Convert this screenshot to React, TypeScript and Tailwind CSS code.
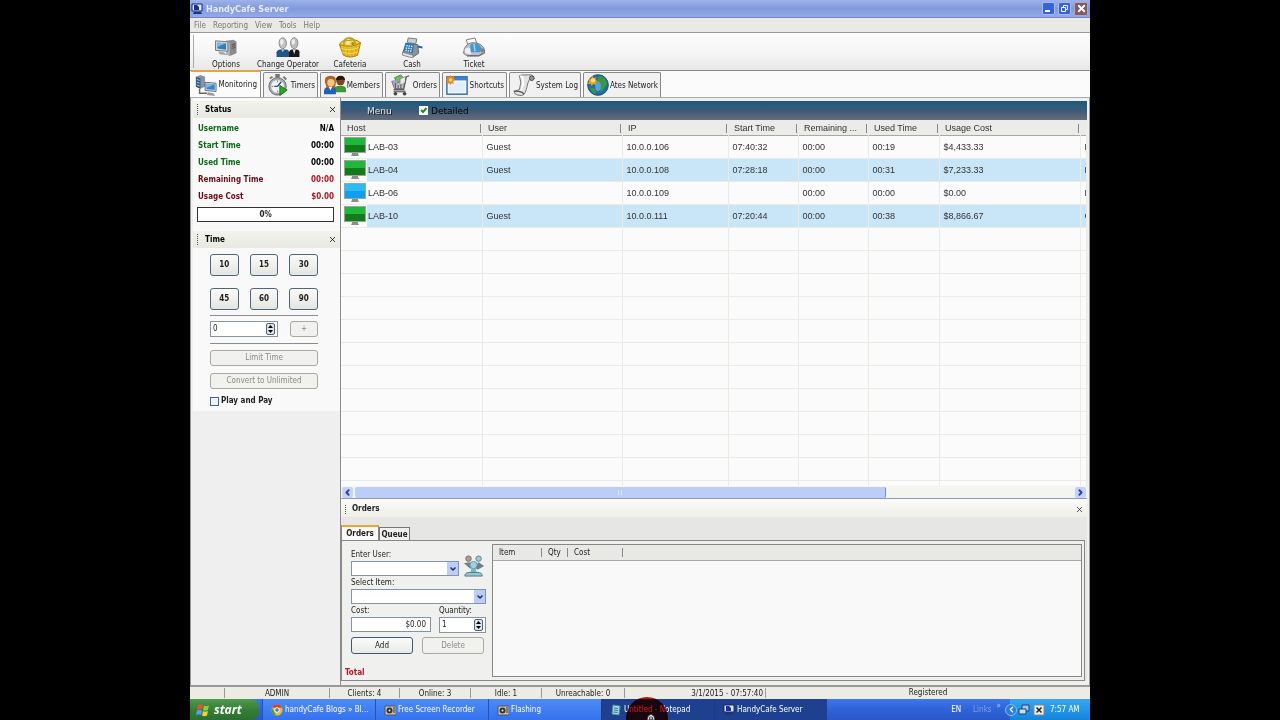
import React from 'react';
import { ChevronDown, ChevronLeft, ChevronRight, X } from 'lucide-react';

const OptionsIcon = () => (
  <svg viewBox="0 0 24 22" className="h-[21px] w-6">
    <path d="M12 4l8-1 3 2v12l-7 3-4-2z" fill="#8b8b8b" />
    <path d="M12 4l4 2v14l-4-2z" fill="#b5b5b5" />
    <path d="M18 8l4-1M18 10l4-1M18 12l4-1" stroke="#555" />
    <path d="M1 4l13 1v10L1 14z" fill="#d3d6d8" stroke="#777" />
    <path d="M3 6l9 .5v6.800L3 12z" fill="#2f7fc0" />
    <path d="M3 6l9 .5-9 4z" fill="#79b8e6" />
    <path d="M4 15l6 1 3 3-8-1z" fill="#a7a7a7" />
  </svg>
);

const OperatorIcon = () => (
  <svg viewBox="0 0 24 22" className="h-[21px] w-6">
    <path d="M0 21v-5q1-3 4-3h6q3 0 3 3v5z" fill="#1f5684" />
    <path d="M13 21v-5q1-3 3-3h5q3 0 3 3v5z" fill="#16181c" />
    <path d="M17 13l1.500 5 1.500-5z" fill="#ddd" />
    <path d="M5 13l1.500 3L8 13z" fill="#a9c5dc" />
    <ellipse cx="6.500" cy="6.500" rx="3.800" ry="5.800" fill="#c4c4c4" stroke="#888" />
    <ellipse cx="18.500" cy="6.500" rx="3.800" ry="5.800" fill="#bdbdbd" stroke="#888" />
    <ellipse cx="5.500" cy="5" rx="1.800" ry="3" fill="#eee" />
    <ellipse cx="17.500" cy="5" rx="1.800" ry="3" fill="#eee" />
  </svg>
);

const BasketIcon = () => (
  <svg viewBox="0 0 24 22" className="h-[21px] w-6">
    <path d="M1 8q10 3 22-2l-3 13q-8 4-15 0z" fill="#e8bd22" stroke="#a97c0a" />
    <path d="M5 11l2 9M9 12l1 9M14 12v9M19 10l-2 10" stroke="#c3920f" strokeWidth=".7" />
    <path d="M3 12q9 3 18-1M4 16q8 3 16 0" fill="none" stroke="#f7dd62" />
    <path d="M1 8q2-5 8-4 8-3 14 2-8 6-22 2z" fill="#f3d24c" stroke="#a97c0a" />
    <path d="M6 9Q4 1 12 1q6 1 6 9" fill="none" stroke="#c8a021" strokeWidth="2" />
    <circle cx="10" cy="6" r="2" fill="#fff1a4" />
    <circle cx="15" cy="7" r="1.500" fill="#a6831a" />
  </svg>
);

const CashIcon = () => (
  <svg viewBox="0 0 24 22" className="h-[21px] w-6">
    <path d="M8 1l9 1-1 5-9-1z" fill="#c9ced3" stroke="#777" />
    <path d="M6 7l12 1 1 9-6 4-11-4z" fill="#8c9399" stroke="#667" />
    <path d="M5 6l9 1-1 10-10-2z" fill="#2d77b4" />
    <path d="M6 9l7 1M5.500 11.500l7 1M5 14l7 1" stroke="#d8ecfa" strokeDasharray="1.500 1" strokeWidth="1.500" />
    <path d="M2 16l11 3v3L2 19z" fill="#e1e5e8" stroke="#888" />
    <path d="M18 9l5 1v2l-5-1z" fill="#2567a5" />
  </svg>
);

const TicketIcon = () => (
  <svg viewBox="0 0 24 22" className="h-[21px] w-6">
    <path d="M4 3l9-2 2 6-9 3z" fill="#fff" stroke="#777" />
    <path d="M2 12q3-6 9-6 9 0 12 7v4l-6 3H5l-4-3z" fill="#bcc3ca" stroke="#6d7379" />
    <path d="M8 8q8-4 12 4l-2 4H8z" fill="#4798d1" />
    <path d="M12 7l1 8" stroke="#a7d5f1" strokeWidth="1.500" />
    <path d="M2 13q4-3 6-1l1 6-6-1z" fill="#eef1f3" />
    <circle cx="20.500" cy="14" r="2.200" fill="#7d848b" />
    <path d="M5 19.500h12l5-3" stroke="#666" fill="none" />
  </svg>
);

const MonitoringIcon = () => (
  <svg viewBox="0 0 24 24" className="size-[22px]">
    <path d="M1 3l5-2 5 2v11l-5 2-5-2z" fill="#8496a5" />
    <path d="M1 3l5 2v11l-5-2z" fill="#34598a" />
    <path d="M2 6l3 1M2 9l3 1M2 12l3 1" stroke="#b7d7f5" />
    <path d="M5 16v5h8" fill="none" stroke="#666" strokeWidth="1.500" />
    <path d="M11 9l12 1v9l-12-1z" fill="#d5d9dc" stroke="#666" />
    <path d="M12.500 10.500l9 .8v6l-9-.8z" fill="#2f86cb" />
    <path d="M12.500 10.500l9 .8-9 4z" fill="#79b8e6" />
    <path d="M14 20l6 1 2 3-9-1z" fill="#999" />
  </svg>
);

const TimersIcon = () => (
  <svg viewBox="0 0 24 24" className="size-[22px]">
    <path d="M9 0h5v4H9z" fill="#777" />
    <path d="M3 5l3-2M18 3l3 3" stroke="#777" strokeWidth="2" />
    <circle cx="11.500" cy="13.500" r="9.500" fill="#a4abb1" stroke="#666" />
    <circle cx="11.500" cy="13.500" r="7" fill="#eef3f7" />
    <path d="M11.500 7v2M5 13.500h2M11.500 20v-2" stroke="#777" />
    <path d="M11.500 13.500l4-5M11.500 13.500H8" stroke="#2b4a67" strokeWidth="1.500" />
    <path d="M14 12.500l8 5-8 6z" fill="#2ea52a" stroke="#1b701a" />
  </svg>
);

const MembersIcon = () => (
  <svg viewBox="0 0 24 24" className="size-[22px]">
    <path d="M11 20v-5q2-2 4-2h5q4 0 4 4v3z" fill="#3f982e" />
    <circle cx="18" cy="8" r="4.500" fill="#7a4a23" />
    <path d="M13 7q0-5 5-5t5 5l-3-1z" fill="#27180c" />
    <path d="M0 22v-4q1-4 5-4h4q4 0 4 4v4z" fill="#2461b4" />
    <path d="M1 9q-1-7 6-7t6 7l-1 6H3z" fill="#b0641c" />
    <circle cx="7.500" cy="9.500" r="4" fill="#f1c48e" />
    <path d="M5 14l2 4 2-4z" fill="#fff" />
  </svg>
);

const CartIcon = () => (
  <svg viewBox="0 0 24 24" className="size-[22px]">
    <path d="M3 8l14-1-1 9H6z" fill="#c3c6c9" stroke="#6b6b6b" />
    <path d="M6 4l7-3 4 5-8 4z" fill="#6dbf58" stroke="#4d8a3c" />
    <path d="M12 5l6-2v7l-6 2z" fill="#e8e8f2" stroke="#888" />
    <path d="M4 7l5 0 0 6-4-1z" fill="#b19ad0" />
    <path d="M22 2l-3 1-3 14H5M7 10v6M10 12v4M13 12v4" fill="none" stroke="#5f5f5f" strokeWidth="1.300" />
    <path d="M5 18h13v2H5z" fill="#777" />
    <circle cx="7" cy="21.500" r="2" fill="#444" />
    <circle cx="17" cy="21.500" r="2" fill="#444" />
  </svg>
);

const ShortcutsIcon = () => (
  <svg viewBox="0 0 24 24" className="size-[22px]">
    <rect x="1" y="3" width="22" height="19" fill="#f4f9fe" stroke="#2b62ad" strokeWidth="1.500" />
    <path d="M1 3h22v4H1z" fill="#3b7fd4" />
    <path d="M3 9h18v11H3z" fill="#e2effb" />
    <path d="M5 1l1.200 2L9 2.500 8.200 5 10 6.500 8 8l.5 2.500L6 10l-1.200 2L3.500 10 1 10.500 1.500 8 0 6.500 1.500 5 1 2.500 3.700 3z" fill="#e8891c" />
    <circle cx="5" cy="6.500" r="2" fill="#ffd84a" />
  </svg>
);

const LogIcon = () => (
  <svg viewBox="0 0 24 24" className="size-[22px]">
    <path d="M7 2q2-1 4-1h9q3 1 3 4l-2 2-3-1q-2 3-3 9-1 6-4 8-1 1-6 0-4-1-4-4l6-2q3-8 0-15z" fill="#e2e2e2" stroke="#6a6a6a" />
    <path d="M8 2q4 2 3 9l-2 7" fill="none" stroke="#fff" strokeWidth="2" />
    <circle cx="20.500" cy="4.500" r="2.500" fill="#999" stroke="#444" />
    <path d="M1 19q3-1 9 1l2 2" fill="none" stroke="#555" strokeWidth="1.500" />
  </svg>
);

const GlobeIcon = () => (
  <svg viewBox="0 0 24 24" className="size-[22px]">
    <circle cx="12" cy="12" r="11.300" fill="#1d6fa9" stroke="#174a6c" />
    <path d="M13 2q8 1 9 9l-3 4-3 5-3-3 1-5-3-5zM3 15l5 0 2 4-1 3q-4-2-6-7z" fill="#3c9444" />
    <path d="M10 9q4-2 5 3t-3 7q-5-2-2-10z" fill="#4fa6e0" />
    <path d="M6 2l1.200 2.500L10 3.500 9.500 6.500 12 8l-2.500 1.200L10 12l-3-1-2 2-1-2.500-3 .5L2.500 8 1 6l3-.5z" fill="#eda41c" />
    <circle cx="6.500" cy="7" r="2.300" fill="#ffe46a" />
  </svg>
);

const UsersIcon = () => (
  <svg viewBox="0 0 24 24" className="size-[22px]">
    <circle cx="6" cy="4" r="3" fill="#b39a92" stroke="#7c6c67" />
    <circle cx="17" cy="4" r="3" fill="#a5c4cf" stroke="#5d8190" />
    <path d="M1 9l6-1 5 4-4 3zM23 12l-6-4-5 5 4 3z" fill="#67828e" />
    <circle cx="11.500" cy="11" r="4" fill="#9fd0e2" stroke="#5d91a6" />
    <path d="M9 15h5l1 5H8z" fill="#7db4c8" />
    <path d="M2 23q0-4 5-4h9q5 0 5 4z" fill="#8fc5d8" stroke="#4d7787" />
  </svg>
);

const HostIcon = ({ idle }: { idle: boolean }) => (
  <svg viewBox="0 0 22 19" className="h-[19px] w-[22px] shrink-0">
    <path d="M8 15h6v2l1 2H7l1-2z" fill="#8d8d8d" />
    <rect width="22" height="16" fill="#98a59b" />
    <rect x="1" y="1" width="20" height="7" fill={idle ? '#2fb9f5' : '#1fb83a'} />
    <rect x="1" y="8" width="20" height="7" fill={idle ? '#0e9ff0' : '#157a1c'} />
  </svg>
);

const PcIcon = () => (
  <svg viewBox="0 0 12 12" className="size-3 shrink-0">
    <path d="M1 1h10v7H1z" fill="#dfe8f8" stroke="#16266b" />
    <path d="M3 2h3l2 2v3H3z" fill="#1a2f8f" />
    <path d="M3 9h7l1 2H2z" fill="#20357a" />
  </svg>
);

const CameraIcon = () => (
  <svg viewBox="0 0 12 12" className="size-3 shrink-0">
    <path d="M1 2h11v9H1z" fill="#c9c4b8" stroke="#555" />
    <circle cx="5.500" cy="6.500" r="3" fill="#333" />
    <circle cx="5.500" cy="6.500" r="1" fill="#eee" />
    <path d="M10 3v6" stroke="#333" />
  </svg>
);

const ChromeIcon = () => (
  <svg viewBox="0 0 12 12" className="size-3 shrink-0">
    <circle cx="6" cy="6" r="5.500" fill="#e8c02c" />
    <path d="M1 3.800A5.500 5.500 0 0 1 11 3.800H6z" fill="#dd3c2f" />
    <path d="M1 3.800L5 11.400A5.500 5.500 0 0 1 1 3.800z" fill="#3a9e48" />
    <circle cx="6" cy="6" r="2.300" fill="#3d79e0" stroke="#fff" />
  </svg>
);

const NotepadIcon = () => (
  <svg viewBox="0 0 12 12" className="size-3 shrink-0">
    <path d="M3 1l7 1-1 9-7-1z" fill="#9fdbe8" stroke="#4d8da2" />
    <path d="M4 4l4 .5M4 6l4 .5M3.500 8l4 .5" stroke="#36788f" />
  </svg>
);

const toolbar = [
  { icon: OptionsIcon, label: 'Options' },
  { icon: OperatorIcon, label: 'Change Operator' },
  { icon: BasketIcon, label: 'Cafeteria' },
  { icon: CashIcon, label: 'Cash' },
  { icon: TicketIcon, label: 'Ticket' },
];

const tabs = [
  { icon: TimersIcon, label: 'Timers', width: 'w-[55px]' },
  { icon: MembersIcon, label: 'Members', width: 'w-[63px]' },
  { icon: CartIcon, label: 'Orders', width: 'w-[55px]' },
  { icon: ShortcutsIcon, label: 'Shortcuts', width: 'w-[65px]' },
  { icon: LogIcon, label: 'System Log', width: 'w-[72px]' },
  { icon: GlobeIcon, label: 'Ates Network', width: 'w-[78px]' },
];

const status = [
  { label: 'Username', value: 'N/A', color: 'text-[#0a6a14]', valueColor: 'text-black' },
  { label: 'Start Time', value: '00:00', color: 'text-[#0a6a14]', valueColor: 'text-black' },
  { label: 'Used Time', value: '00:00', color: 'text-[#0a6a14]', valueColor: 'text-black' },
  { label: 'Remaining Time', value: '00:00', color: 'text-[#6b0a14]', valueColor: 'text-[#b01820]' },
  { label: 'Usage Cost', value: '$0.00', color: 'text-[#6b0a14]', valueColor: 'text-[#b01820]' },
];

const columns = [
  { label: 'Host', width: 'w-[141px]' },
  { label: 'User', width: 'w-[140px]' },
  { label: 'IP', width: 'w-[106px]' },
  { label: 'Start Time', width: 'w-[70px]' },
  { label: 'Remaining ...', width: 'w-[70px]' },
  { label: 'Used Time', width: 'w-[71px]' },
  { label: 'Usage Cost', width: 'w-[141px]' },
];

const hosts = [
  ['LAB-03', 'Guest', '10.0.0.106', '07:40:32', '00:00', '00:19', '$4,433.33', 'F'],
  ['LAB-04', 'Guest', '10.0.0.108', '07:28:18', '00:00', '00:31', '$7,233.33', 'F'],
  ['LAB-06', '', '10.0.0.109', '', '00:00', '00:00', '$0.00', 'N'],
  ['LAB-10', 'Guest', '10.0.0.111', '07:20:44', '00:00', '00:38', '$8,866.67', 'C'],
];

const statusBar = [
  { text: '', width: 'w-[35px]' },
  { text: 'ADMIN', width: 'w-[105px]' },
  { text: 'Clients: 4', width: 'w-[70px]' },
  { text: 'Online: 3', width: 'w-[71px]' },
  { text: 'Idle: 1', width: 'w-[71px]' },
  { text: 'Unreachable: 0', width: 'w-[83px]' },
];

const tasks = [
  { icon: ChromeIcon, label: 'handyCafe Blogs » Bl...', active: false },
  { icon: CameraIcon, label: 'Free Screen Recorder', active: false },
  { icon: CameraIcon, label: 'Flashing', active: false },
  { icon: NotepadIcon, label: 'Untitled - Notepad', active: true },
  { icon: PcIcon, label: 'HandyCafe Server', active: true },
];

function PanelHeader({ title }: { title: string }) {
  return (
    <div className="flex h-[17px] items-center bg-gradient-to-b from-[#f3f3ee] to-[#e9e9e4] pr-[3px] pl-1 font-bold text-black">
      <span className="h-[11px] border-l border-dotted border-[#555]" />
      <h2 className="ml-[7px] flex-1">{title}</h2>
      <button aria-label={`Close ${title}`}>
        <X className="size-[9px]" strokeWidth={2} />
      </button>
    </div>
  );
}

function Spinner({ id, value }: { id: string; value: string }) {
  return (
    <div className="flex h-4 items-center border border-[#8a94a0] bg-white pr-[2px]">
      <input id={id} aria-label={id} defaultValue={value} className="w-0 flex-1 pl-[2px] outline-none" />
      <div className="flex flex-col rounded-[2px] border border-[#56606c] bg-[#dfe5ee]">
        <button type="button" aria-label="Increase" className="flex h-[5px] w-[7px] items-center justify-center">
          <svg viewBox="0 0 5 3" className="h-[3px] w-[5px]"><path d="M0 3L2.500 0 5 3z" /></svg>
        </button>
        <button type="button" aria-label="Decrease" className="flex h-[5px] w-[7px] items-center justify-center">
          <svg viewBox="0 0 5 3" className="h-[3px] w-[5px]"><path d="M0 0l2.500 3L5 0z" /></svg>
        </button>
      </div>
    </div>
  );
}

function Combo({ id }: { id: string }) {
  return (
    <div className="relative h-[15px] border border-[#8492ab] bg-white">
      <select id={id} className="block h-full w-full appearance-none outline-none">
        <option></option>
      </select>
      <span className="pointer-events-none absolute inset-y-0 right-0 flex w-[11px] items-center justify-center bg-[#bccdf6]">
        <ChevronDown className="size-2 text-[#26365e]" strokeWidth={5} />
      </span>
    </div>
  );
}

function Sidebar() {
  return (
    <aside className="w-[150px] shrink-0 border-r border-[#8c8c8c] bg-[#efefef] pl-[2px]">
      <div className="bg-[#f9f9f9] pt-[3px] pb-[5px]">
        <PanelHeader title="Status" />
        <dl className="pt-[2px] pr-[6px] pl-[5px] font-bold">
          {status.map((item) => (
            <div key={item.label} className="flex h-[17px] items-center justify-between">
              <dt className={item.color}>{item.label}</dt>
              <dd className={item.valueColor}>{item.value}</dd>
            </div>
          ))}
        </dl>
        <div className="mt-[2px] mr-[6px] mb-[9px] ml-1 flex h-[15px] items-center justify-center border border-[#333] bg-white font-bold">
          0%
        </div>
        <PanelHeader title="Time" />
        <div className="mr-[22px] ml-[17px] pt-[6px]">
          <div className="grid grid-cols-3 gap-x-[11px] gap-y-3">
            {['10', '15', '30', '45', '60', '90'].map((n) => (
              <button key={n} className="h-[22px] rounded-[3px] border border-[#4d6679] bg-gradient-to-b from-[#fbfbfb] to-[#e4e4e0] font-bold">
                {n}
              </button>
            ))}
          </div>
          <div className="mt-[5px] mb-[6px] grid grid-cols-[68px_28px] justify-between border-y border-[#8c8c8c] pt-[5px] pb-[6px]">
            <Spinner id="Minutes" value="0" />
            <button disabled className="rounded-[3px] border border-[#a9a9a4] bg-[#f1f1ee] text-[#8a8a8a]">+</button>
          </div>
          <button disabled className="block h-4 w-full rounded-[3px] border border-[#a9a9a4] bg-[#f1f1ee] text-[#8a8a8a]">
            Limit Time
          </button>
          <button disabled className="mt-[7px] block h-4 w-full rounded-[3px] border border-[#a9a9a4] bg-[#f1f1ee] text-[#8a8a8a]">
            Convert to Unlimited
          </button>
          <label className="mt-[7px] flex items-center gap-[2px] font-bold">
            <input type="checkbox" className="size-[9px] appearance-none border border-[#4a6484] bg-[#f0f3f6]" />
            Play and Pay
          </label>
        </div>
      </div>
    </aside>
  );
}

function HostTable() {
  return (
    <div className="min-h-0 flex-1 overflow-hidden bg-[#fbfbfb]">
      <table className="w-full table-fixed border-collapse font-['Liberation_Sans',Arial,sans-serif] text-[9px] whitespace-nowrap text-[#333]">
        <thead>
          <tr className="h-[15px] border-b border-[#a8a8a8] bg-[#ebebe9]">
            {columns.map((col) => (
              <th key={col.label} className={`${col.width} p-0 font-normal`}>
                <div className="flex items-center justify-between overflow-hidden pt-[2px] pl-[6px]">
                  <span>{col.label}</span>
                  <span className="mr-[1px] h-[9px] w-px bg-[#888]" />
                </div>
              </th>
            ))}
            <th className="p-0" />
          </tr>
        </thead>
        <tbody>
          {hosts.map((row, i) => (
            <tr key={row[0]} className="h-[23px]">
              {row.map((cell, j) => (
                <td
                  key={j}
                  className={`overflow-hidden border-r border-b border-[#ebebe6] p-0 ${j === 0 ? '' : 'pl-1'} ${i % 2 === 1 && j > 0 ? 'bg-[#c9e6f8]' : ''}`}
                >
                  {j === 0 ? (
                    <div className="flex h-[22px] items-center pl-[3px]">
                      <HostIcon idle={i === 2} />
                      <span className={`ml-[1px] flex h-full flex-1 items-center pl-px ${i % 2 === 1 ? 'bg-[#c9e6f8]' : ''}`}>{cell}</span>
                    </div>
                  ) : (
                    cell
                  )}
                </td>
              ))}
            </tr>
          ))}
          {Array.from({ length: 12 }, (_, i) => (
            <tr key={i} className="h-[23px]">
              {Array.from({ length: 8 }, (_, j) => (
                <td key={j} className="border-r border-b border-[#ebebe6] p-0" />
              ))}
            </tr>
          ))}
        </tbody>
      </table>
    </div>
  );
}

function OrdersPanel() {
  return (
    <section className="bg-[#e6e6e4]">
      <div className="flex h-[18px] items-center bg-gradient-to-b from-[#fbfbf9] to-[#efeee8] pt-[2px] pr-[3px] pl-1 font-bold">
        <span className="h-[9px] border-l border-dotted border-[#555]" />
        <h2 className="ml-[6px] flex-1">Orders</h2>
        <button aria-label="Close Orders">
          <X className="size-[9px]" strokeWidth={2} />
        </button>
      </div>
      <div className="flex items-end pt-2 font-bold">
        <button className="h-[15px] w-[38px] border-x border-t-2 border-[#888] border-t-[#e8a92e] bg-[#f9f9f9]">Orders</button>
        <button className="h-[13px] w-[31px] border-x border-t border-[#777] bg-[#f1f1ee] pt-px">Queue</button>
      </div>
      <div className="mr-[2px] flex border border-[#888] bg-[#f0f0ee] pr-[2px]">
        <form className="flex w-[150px] shrink-0 flex-col pt-2">
          <div className="flex pl-[9px]">
            <div className="w-[108px] shrink-0">
              <label htmlFor="user" className="block h-3 leading-3">Enter User:</label>
              <Combo id="user" />
            </div>
            <button type="button" aria-label="Users" className="mt-[6px] ml-1">
              <UsersIcon />
            </button>
          </div>
          <div className="mr-[6px] ml-[9px]">
            <label htmlFor="item" className="block h-3 leading-3">Select Item:</label>
            <Combo id="item" />
          </div>
          <div className="mt-[1px] mr-[6px] ml-[9px] flex justify-between">
            <div className="w-20">
              <label htmlFor="cost" className="block h-3 leading-3">Cost:</label>
              <input id="cost" defaultValue="$0.00" className="block h-[15px] w-full border border-[#8492ab] bg-white pr-1 text-right outline-none" />
            </div>
            <div className="w-[47px]">
              <label htmlFor="quantity" className="block h-3 leading-3">Quantity:</label>
              <Spinner id="quantity" value="1" />
            </div>
          </div>
          <div className="mt-1 mr-2 ml-[9px] flex justify-between">
            <button type="button" className="h-[17px] w-[62px] rounded-[3px] border border-[#3f5a70] bg-gradient-to-b from-[#fbfbfb] to-[#e9e9e5]">Add</button>
            <button type="button" disabled className="h-[17px] w-[62px] rounded-[3px] border border-[#a9a9a4] bg-[#f1f1ee] text-[#8a8a8a]">Delete</button>
          </div>
          <p className="mt-[14px] mb-[2px] ml-[3px] font-bold text-[#b01820]">Total</p>
        </form>
        <div className="my-[3px] flex-1 border border-[#888] bg-[#f9f9f9]">
          <table className="w-full table-fixed">
            <thead>
              <tr className="h-[15px] border-b border-[#a8a8a8] bg-[#e8e8e5] text-left">
                <th className="w-12 p-0 font-normal"><div className="pl-[6px] leading-[9px]">Item</div></th>
                <th className="w-[26px] p-0 font-normal"><div className="border-l border-[#888] pl-[6px] leading-[9px]">Qty</div></th>
                <th className="w-[56px] p-0 font-normal"><div className="border-x border-[#888] pl-[6px] leading-[9px]">Cost</div></th>
                <th />
              </tr>
            </thead>
            <tbody />
          </table>
        </div>
      </div>
    </section>
  );
}

function Taskbar() {
  return (
    <footer className="relative flex h-[21px] shrink-0 bg-gradient-to-b from-[#3b78ee] via-[#2f63d6] to-[#2a58c8] text-white">
      <button className="flex w-[69px] items-center gap-1 rounded-r-lg bg-gradient-to-b from-[#4f9a4f] via-[#357f36] to-[#2c6f30] pl-[6px] font-['Open_Sans',sans-serif] text-[12px] font-bold italic">
        <svg viewBox="0 0 14 14" className="size-[14px]">
          <path d="M2 2q3-1.500 5 0L6 6.500q-2-1.500-5 0z" fill="#e5532b" />
          <path d="M8 2.500q2 1.500 5 0L12 7q-3 1.500-5 0z" fill="#8ccc4a" />
          <path d="M1 7.500q3-1.500 5 0L5 12q-2-1.500-5 0z" fill="#5f9df0" />
          <path d="M7 8q2 1.500 5 0l-1 4.500q-3 1.500-5 0z" fill="#f5cd3c" />
        </svg>
        start
      </button>
      <nav className="ml-[3px] flex">
        {tasks.map((task) => (
          <button
            key={task.label}
            className={`flex w-[113px] items-center gap-[2px] border-l pl-2 ${task.active ? 'border-[#1c3a80] bg-[#1f408f]' : 'border-[#2450b8] bg-gradient-to-b from-[#4d8bf8] to-[#3672ec]'}`}
          >
            <task.icon />
            {task.label}
          </button>
        ))}
      </nav>
      <div className="flex flex-1 items-center justify-end pr-[9px]">
        <span className="mr-3">EN</span>
        <span className="mr-[5px] text-[#7f9fe8]">Links</span>
        <span className="mb-[7px] text-[#b5c8f2]">»</span>
      </div>
      <div className="flex w-20 items-center gap-[1px] bg-gradient-to-b from-[#35a7f2] to-[#1484dc]">
        <button aria-label="Show hidden icons" className="-ml-[5px] flex size-3 items-center justify-center rounded-full border border-[#7fc0f8] bg-[#2b7be0]">
          <ChevronLeft className="size-[9px]" strokeWidth={4} />
        </button>
        <svg viewBox="0 0 12 12" className="size-3">
          <path d="M4 1h7v6H4z" fill="#9dc7ee" stroke="#22416f" />
          <path d="M1 5h7v5H1z" fill="#c7dff5" stroke="#22416f" />
        </svg>
        <svg viewBox="0 0 12 12" className="ml-[2px] size-3">
          <path d="M1 1h10v10H1z" fill="#eee" stroke="#888" />
          <path d="M3.500 3.500l5 5M8.500 3.500l-5 5" stroke="#222" strokeWidth="1.500" />
        </svg>
        <time className="ml-1">7:57 AM</time>
      </div>
      {/* click highlight of the screen recorder, with the pointer over it */}
      <span className="pointer-events-none absolute -top-[2px] left-[436px] size-[42px] rounded-full bg-[#c8141c] mix-blend-multiply" />
      <svg viewBox="0 0 12 9" className="pointer-events-none absolute bottom-0 left-[455px] h-[7px] w-3">
        <path d="M1 9q0-5 3-6 2-3 4 0 3 1 3 6z" fill="#eee" stroke="#222" />
        <path d="M4 9V5M6 9V4M8 9V5" stroke="#222" />
      </svg>
    </footer>
  );
}

export default function App() {
  return (
    <div className="h-screen overflow-hidden bg-black">
      <div className="mx-auto flex h-full w-full max-w-[900px] flex-col bg-[#efefed] font-['DejaVu_Sans_Condensed','DejaVu_Sans',sans-serif] text-[8px] leading-[10px] whitespace-nowrap text-[#222]">
        <header className="flex h-[18px] shrink-0 items-center gap-[3px] border-b border-[#7286c0] bg-gradient-to-b from-[#9db3ea] via-[#8299dc] to-[#92abe8] pr-[2px] pl-[1px]">
          <PcIcon />
          <h1 className="flex-1 text-[9px] font-bold text-[#e6edfb]">HandyCafe Server</h1>
          <button aria-label="Minimize" className="flex size-[13px] items-end rounded-[2px] border border-[#a9bdf2] bg-[#3563d8] p-[2px]">
            <span className="h-[2px] w-[5px] bg-white" />
          </button>
          <button aria-label="Restore" className="flex size-[13px] items-center justify-center rounded-[2px] border border-[#a9bdf2] bg-[#3563d8]">
            <svg viewBox="0 0 9 9" className="size-[9px]" fill="none" stroke="#fff">
              <path d="M3.500 3V1.500h4v4H6M1.500 3.500h4v4h-4z" />
            </svg>
          </button>
          <button aria-label="Close" className="flex size-[14px] items-center justify-center rounded-[2px] border border-[#b5a5b8] bg-[#7c5c66] text-white">
            <X className="size-[11px]" strokeWidth={4} />
          </button>
        </header>
        <nav className="flex h-[15px] shrink-0 items-center gap-[7px] border-b border-[#999] bg-[#e9e9e7] pt-px pl-1 text-[#777]">
          {['File', 'Reporting', 'View', 'Tools', 'Help'].map((item) => (
            <button key={item}>{item}</button>
          ))}
        </nav>
        <div className="flex h-[38px] shrink-0 border-b border-[#888] bg-gradient-to-b from-[#fdfdfd] via-[#f6f6f6] to-[#e8e8e8] pl-[3px]">
          <span className="my-[2px] mr-px w-px bg-[#aaa]" />
          {toolbar.map((item) => (
            <button key={item.label} className="flex w-[62px] flex-col items-center pt-1">
              <item.icon />
              <span className="mt-[2px]">{item.label}</span>
            </button>
          ))}
        </div>
        <nav className="flex h-[27px] shrink-0 items-end gap-[2px] border-b border-[#aaa] bg-[#fbfbfb] pl-px">
          <button className="flex h-[27px] w-[70px] items-center justify-between border-t-2 border-r border-[#888] border-t-[#e8a33d] bg-[#fbfbfb] pr-[3px] pl-1">
            <MonitoringIcon />
            <span className="pt-px">Monitoring</span>
          </button>
          {tabs.map((tab) => (
            <button key={tab.label} className={`${tab.width} flex h-[25px] items-center justify-between rounded-t-[2px] border-x border-t border-[#888] bg-[#f1f1f1] pr-[2px] pl-[3px]`}>
              <tab.icon />
              <span className="pt-[2px]">{tab.label}</span>
            </button>
          ))}
        </nav>
        <main className="flex min-h-0 flex-1 border-x border-[#999]">
          <Sidebar />
          <div className="flex min-w-0 flex-1 flex-col pt-[3px] pr-[2px] pb-1">
            <div className="flex h-[19px] shrink-0 items-center bg-gradient-to-b from-[#1a5a7e] via-[#3c5a78] to-[#666c78] pl-[26px] font-['DejaVu_Sans',sans-serif] text-[9px]">
              <button className="w-[52px] text-left text-[#dfe6ea] text-shadow-[1px_1px_0_#222]">Menu</button>
              <label className="flex items-center gap-[3px] text-black">
                <input type="checkbox" defaultChecked className="peer sr-only" />
                <svg viewBox="0 0 9 9" className="size-[9px] bg-white" fill="none" stroke="#1d8a2c" strokeWidth="2">
                  <path d="M2 4l2 2 3.500-4" />
                </svg>
                Detailed
              </label>
            </div>
            <HostTable />
            <div className="flex h-3 shrink-0 items-center bg-[#f4f4f1] pr-[1px] pl-[1px]">
              <button aria-label="Scroll left" className="flex h-[11px] w-[11px] items-center justify-center rounded-[2px] bg-[#c4d3fa]">
                <ChevronLeft className="size-[9px] text-[#2c4590]" strokeWidth={5} />
              </button>
              <div className="flex-1 px-[2px]">
                <div className="flex h-[11px] w-[74%] items-center justify-center rounded-[2px] border-r border-[#7088c8] bg-[#bccdf8]">
                  <span className="h-[5px] w-1 border-x border-[#dfe8ff]" />
                </div>
              </div>
              <button aria-label="Scroll right" className="flex h-[11px] w-[11px] items-center justify-center rounded-[2px] bg-[#c4d3fa]">
                <ChevronRight className="size-[9px] text-[#2c4590]" strokeWidth={5} />
              </button>
            </div>
            <div className="h-px shrink-0 bg-[#8e9bb0]" />
            <OrdersPanel />
          </div>
        </main>
        <div className="flex h-[14px] shrink-0 items-center border-t-2 border-[#999] bg-[#ecebe4] text-center">
          {statusBar.map((cell) => (
            <span key={cell.text} className={`${cell.width} h-[10px] border-r border-[#999] leading-[11px]`}>{cell.text}</span>
          ))}
          <span className="h-[10px] w-[141px] border-r border-[#999] pr-[2px] text-right leading-[11px]">3/1/2015 - 07:57:40</span>
          <span className="flex-1">Registered</span>
        </div>
        <Taskbar />
      </div>
    </div>
  );
}
